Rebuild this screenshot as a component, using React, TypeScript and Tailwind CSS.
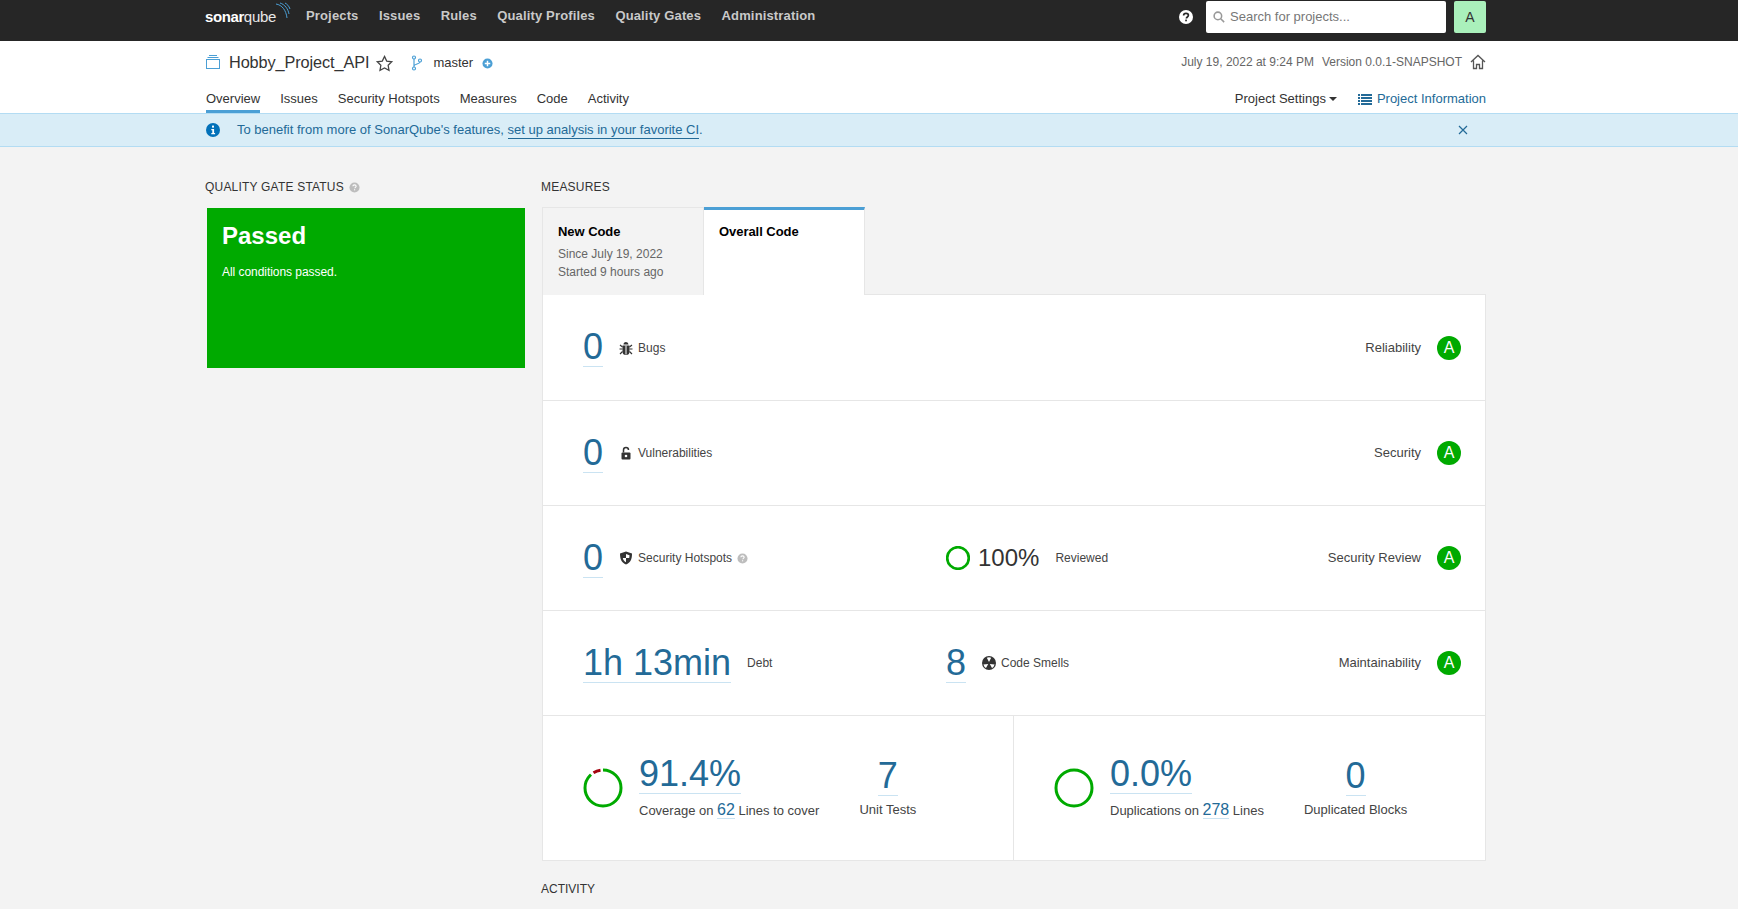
import React from "react";

const font = { fontFamily: '"Liberation Sans", Arial, sans-serif' };

const HelpDot = () => (
  <svg viewBox="0 0 12 12" className="w-[11px] h-[11px] inline-block">
    <circle cx="6" cy="6" r="5.5" fill="#bdbdbd" />
    <path d="M4.2 4.7c0-1 .8-1.6 1.8-1.6s1.8.6 1.8 1.5c0 1.3-1.5 1.2-1.5 2.3" fill="none" stroke="#fff" strokeWidth="1.2" />
    <rect x="5.5" y="7.9" width="1.2" height="1.2" fill="#fff" />
  </svg>
);

const Rating = () => (
  <div className="w-6 h-6 rounded-full bg-[#00aa00] text-white flex items-center justify-center text-[16px] leading-none">
    A
  </div>
);

const BigLink = ({ children }: { children: React.ReactNode }) => (
  <span className="inline-block text-[36px] leading-[36px] pt-[1px] pb-[1px] text-[#236a97] border-b border-[#cae3f2]">
    {children}
  </span>
);

const Circle = ({ size, red, stroke = 3 }: { size: number; red?: boolean; stroke?: number }) => (
  <svg width={size} height={size} viewBox="0 0 40 40" className="shrink-0">
    <circle cx="20" cy="20" r="18" fill="none" stroke="#00aa00" strokeWidth={stroke} />
    {red && (
      <>
        <path d="M20 2 A18 18 0 0 0 8 6.6" fill="none" stroke="#fff" strokeWidth="5" />
        <path d="M17.5 2.2 A18 18 0 0 0 10.5 4.8" fill="none" stroke="#a4030f" strokeWidth="3" />
      </>
    )}
  </svg>
);

const Row = ({ children, label }: { children: React.ReactNode; label: string }) => (
  <div className="h-[105px] first:h-[106px] border-b border-[#e6e6e6] flex items-center pl-[40px] pr-[24px]">
    <div className="flex-1 flex items-center">{children}</div>
    <span className="text-[13px] text-[#444] mr-4">{label}</span>
    <Rating />
  </div>
);

const Sub = ({ children }: { children: React.ReactNode }) => (
  <span className="text-[12px] text-[#444] flex items-center gap-[5px]">{children}</span>
);

export default function App() {
  return (
    <div style={font} className="min-h-[909px] h-[909px] overflow-hidden bg-[#f3f3f3] text-[#333]">
      <div className="h-[41px] bg-[#262626]">
        <div className="w-[1281px] ml-[205px] flex items-center h-full">
          <div className="relative w-[84px] text-[15px] text-white mt-[-6px] flex items-baseline">
            <span className="font-bold tracking-[-0.4px]">sonar</span>
            <span className="font-light tracking-[-0.3px] text-[#e8e8e8]">qube</span>
            <svg viewBox="0 0 16 18" className="absolute right-[-2px] top-[-4px] w-4 h-[18px]" fill="none" stroke="#4b9fd5" strokeWidth="1">
              <path d="M1 2c6 1 10 6 11 14" />
              <path d="M5 1c5 1.500 8 6 9 11" />
              <path d="M10 1c2 1 4 3 5 6" />
            </svg>
          </div>
          <nav className="flex gap-[20.4px] ml-[17px] text-[13px] font-bold text-[#c9c9c9] mt-[-9px] tracking-[0.15px]">
            <span>Projects</span>
            <span>Issues</span>
            <span>Rules</span>
            <span>Quality Profiles</span>
            <span>Quality Gates</span>
            <span>Administration</span>
          </nav>
          <div className="ml-auto flex items-center self-start mt-px">
            <svg viewBox="0 0 14 14" className="w-[14px] h-[14px] mr-[13px]">
              <circle cx="7" cy="7" r="7" fill="#fff" />
              <path d="M4.600 5.400c0-1.300 1-2.100 2.400-2.100s2.400.8 2.400 2c0 1.700-2 1.600-2 3.100" fill="none" stroke="#262626" strokeWidth="1.700" />
              <rect x="6.200" y="9.600" width="1.700" height="1.700" fill="#262626" />
            </svg>
            <div className="w-[240px] h-8 bg-white rounded-[2px] flex items-center pl-[7px] text-[13px] text-[#777]">
              <svg viewBox="0 0 14 14" className="w-3 h-3 mr-[5px]" fill="none" stroke="#999" strokeWidth="1.800">
                <circle cx="5.700" cy="5.700" r="4.400" />
                <path d="M9 9l4 4" />
              </svg>
              Search for projects...
            </div>
            <div className="w-8 h-8 ml-[8px] bg-[#aaf0bb] rounded-[2px] flex items-center justify-center text-[14px] text-[#333]">
              A
            </div>
          </div>
        </div>
      </div>

      <div className="bg-white h-[72px]">
        <div className="w-[1280px] ml-[206px] relative">
          <div className="flex items-center h-[40px] pt-[4px]">
            <svg viewBox="0 0 14 14" className="w-[14px] h-[14px] mr-[9px] mt-[-2px]" fill="none" stroke="#4b9fd5" strokeWidth="1">
              <rect x="0.500" y="4.500" width="13" height="9" />
              <path d="M1.500 2.500h11M3 .500h8" />
            </svg>
            <span className="text-[16.300px] tracking-[-0.1px] text-[#333] mt-[-1px]">Hobby_Project_API</span>
            <svg viewBox="0 0 24 24" className="w-[19px] h-[19px] ml-[6px]" fill="none" stroke="#444" strokeWidth="1.600">
              <path d="M12 3l2.800 5.900 6.400.9-4.600 4.500 1.100 6.400-5.700-3-5.700 3 1.100-6.400L2.800 9.800l6.400-.9z" />
            </svg>
            <svg viewBox="0 0 12 16" className="w-3 h-4 ml-[17px]" fill="none" stroke="#4b9fd5" strokeWidth="1.200">
              <circle cx="3" cy="2.500" r="1.500" />
              <circle cx="3" cy="13.500" r="1.500" />
              <circle cx="9" cy="5.500" r="1.500" />
              <path d="M3 4v8M9 7c0 2-6 2-6 4" />
            </svg>
            <span className="text-[13px] ml-[10px] text-[#333]">master</span>
            <svg viewBox="0 0 12 12" className="w-[11px] h-[11px] ml-[9px]">
              <circle cx="6" cy="6" r="5.500" fill="#4b9fd5" />
              <path d="M3 6h6M6 3v6" stroke="#fff" strokeWidth="1.600" />
            </svg>
            <div className="ml-auto flex items-center text-[12px] text-[#666] mt-[-2px]">
              <span>July 19, 2022 at 9:24 PM</span>
              <span className="ml-[8px]">Version 0.0.1-SNAPSHOT</span>
              <svg viewBox="0 0 16 16" className="w-4 h-4 ml-[8px]" fill="none" stroke="#555" strokeWidth="1.300">
                <path d="M1 8l7-6.500L15 8M3.500 6.500v8h3v-4h3v4h3v-8" />
              </svg>
            </div>
          </div>
          <div className="flex items-start h-[32px] text-[13px] text-[#333]">
            <div className="flex gap-[20px]">
              <span className="h-[32px] pt-[8px] border-b-[3px] border-[#4b9fd5]">Overview</span>
              <span className="pt-[8px]">Issues</span>
              <span className="pt-[8px]">Security Hotspots</span>
              <span className="pt-[8px]">Measures</span>
              <span className="pt-[8px]">Code</span>
              <span className="pt-[8px]">Activity</span>
            </div>
            <div className="ml-auto flex items-center pt-[8px]">
              <span>Project Settings</span>
              <span className="ml-[3px] w-0 h-0 border-x-[4px] border-x-transparent border-t-[4px] border-t-[#333]" />
              <svg viewBox="0 0 14 12" className="w-[14px] h-3 ml-[21px] mr-[5px]" fill="#236a97">
                <path d="M0 1h2v2H0zM3 1h11v2H3zM0 4h2v2H0zM3 4h11v2H3zM0 7h2v2H0zM3 7h11v2H3zM0 10h2v2H0zM3 10h11v2H3z" />
              </svg>
              <span className="text-[#236a97]">Project Information</span>
            </div>
          </div>
        </div>
      </div>

      <div className="h-[34px] bg-[#d9edf7] border-y border-[#b3dcf3]">
        <div className="w-[1280px] ml-[206px] h-full flex items-center text-[13px] text-[#236a97]">
          <svg viewBox="0 0 14 14" className="w-[14px] h-[14px] mr-[17px]">
            <circle cx="7" cy="7" r="7" fill="#0271b9" />
            <rect x="6" y="2.600" width="2" height="2" fill="#fff" />
            <path d="M5.300 6h2.800v4h1v1.300H5.300V10h1V7.300h-1z" fill="#fff" />
          </svg>
          <span>
            To benefit from more of SonarQube&apos;s features,{" "}
            <span className="border-b border-[#236a97] pb-[1px]">set up analysis in your favorite CI</span>.
          </span>
          <svg viewBox="0 0 10 10" className="w-[10px] h-[10px] ml-auto mr-[18px]" stroke="#236a97" strokeWidth="1.200">
            <path d="M1 1l8 8M9 1l-8 8" />
          </svg>
        </div>
      </div>

      <div className="w-[1281px] ml-[205px] flex">
        <div className="w-[336px] shrink-0">
          <h3 className="mt-[33px] h-[14px] text-[12px] leading-[14px] font-normal text-[#333] tracking-[0.2px] flex items-center gap-[5px]">
            QUALITY GATE STATUS <HelpDot />
          </h3>
          <div className="ml-[2px] mt-[14px] w-[318px] h-[160px] bg-[#00aa00] text-white pl-[15px] pt-[13px]">
            <div className="text-[24px] leading-[30px] font-bold">Passed</div>
            <div className="text-[12px] mt-[12px] tracking-[-0.05px]">All conditions passed.</div>
          </div>
        </div>

        <div className="flex-1">
          <h3 className="mt-[33px] h-[14px] text-[12px] leading-[14px] font-normal text-[#333] tracking-[0.2px]">MEASURES</h3>
          <div className="ml-[1px] mt-[13px] flex h-[88px]">
            <div className="w-[162px] border border-b-0 border-[#e6e6e6] pl-[15px] pt-[16px]">
              <div className="text-[13px] font-bold text-black leading-[16px] tracking-[-0.05px]">New Code</div>
              <div className="text-[12px] text-[#666] mt-[5px] leading-[18px]">
                Since July 19, 2022
                <br />
                Started 9 hours ago
              </div>
            </div>
            <div className="w-[161px] bg-white border-t-[3px] border-[#4b9fd5] border-r border-r-[#e6e6e6] pl-[15px] pt-[14px] text-[13px] font-bold text-black leading-[16px] tracking-[-0.05px]">
              Overall Code
            </div>
            <div className="flex-1 border-b border-[#e6e6e6]" />
          </div>

          <div className="ml-[1px] bg-white border border-t-0 border-[#e6e6e6]">
            <Row label="Reliability">
              <BigLink>0</BigLink>
              <span className="ml-[16px]"><Sub>
                <svg viewBox="0 0 14 14" className="w-[14px] h-[14px]" fill="#333">
                  <path d="M4.500 3.500a2.500 2.500 0 0 1 5 0zM3.500 4.500h7v6a3.500 3.500 0 0 1-7 0z" />
                  <path d="M1 4l2.500 2M13 4l-2.500 2M.5 8h3M13.500 8h-3M1 13l2.500-2.500M13 13l-2.500-2.500" stroke="#333" strokeWidth="1.200" />
                  <path d="M7 4.500v9" stroke="#fff" strokeWidth="1" />
                </svg>
                Bugs
              </Sub></span>
            </Row>
            <Row label="Security">
              <BigLink>0</BigLink>
              <span className="ml-[16px]"><Sub>
                <svg viewBox="0 0 14 14" className="w-[14px] h-[14px]">
                  <path d="M4.500 6.500V4a2.500 2.500 0 0 1 5 0" fill="none" stroke="#333" strokeWidth="1.500" />
                  <rect x="2.500" y="6.500" width="9" height="7" rx="1" fill="#333" />
                  <circle cx="7" cy="10" r="1.300" fill="#fff" />
                </svg>
                Vulnerabilities
              </Sub></span>
            </Row>
            <Row label="Security Review">
              <div className="w-[363px] flex items-center">
                <BigLink>0</BigLink>
                <span className="ml-[16px]"><Sub>
                  <svg viewBox="0 0 14 14" className="w-[14px] h-[14px]">
                    <path d="M7 .5l6 2c0 6-1.500 9-6 11-4.500-2-6-5-6-11z" fill="#333" />
                    <path d="M7 3l3.500 1.200c0 1.200-.1 2-.3 2.800H7zM7 7v4.300c-1.700-.9-2.800-2.200-3.200-4.300z" fill="#fff" />
                  </svg>
                  Security Hotspots <HelpDot />
                </Sub></span>
              </div>
              <Circle size={24} stroke={4.500} />
              <span className="text-[24px] text-[#333] ml-[8px]">100%</span>
              <span className="text-[12px] text-[#444] ml-[16px]">Reviewed</span>
            </Row>
            <Row label="Maintainability">
              <div className="w-[363px] flex items-center">
                <BigLink>1h 13min</BigLink>
                <span className="ml-[16px]"><Sub>Debt</Sub></span>
              </div>
              <BigLink>8</BigLink>
              <span className="ml-[16px]"><Sub>
                <svg viewBox="0 0 14 14" className="w-[14px] h-[14px]">
                  <circle cx="7" cy="7" r="7" fill="#333" />
                  <path d="M4.800 1.800A5.800 5.800 0 0 1 9.200 1.800L7 6zM1.400 8.500A5.800 5.800 0 0 0 4 12L6.200 8zM12.600 8.500A5.800 5.800 0 0 1 10 12L7.800 8z" fill="#fff" />
                </svg>
                Code Smells
              </Sub></span>
            </Row>

            <div className="h-[144px] flex">
              <div className="w-[471px] border-r border-[#e6e6e6] pl-[40px] flex items-center">
                <Circle size={40} red />
                <div className="ml-[16px] mt-[1px]">
                  <BigLink>91.4%</BigLink>
                  <div className="text-[13px] text-[#444] mt-[4px] leading-[24px]">
                    Coverage on <span className="text-[16px] text-[#236a97] border-b border-[#cae3f2]">62</span> Lines to cover
                  </div>
                </div>
                <div className="ml-[40px] flex flex-col items-center">
                  <BigLink>7</BigLink>
                  <div className="text-[13px] text-[#444] mt-[4px] leading-[20px]">Unit Tests</div>
                </div>
              </div>
              <div className="flex-1 pl-[40px] flex items-center">
                <Circle size={40} />
                <div className="ml-[16px] mt-[1px]">
                  <BigLink>0.0%</BigLink>
                  <div className="text-[13px] text-[#444] mt-[4px] leading-[24px]">
                    Duplications on <span className="text-[16px] text-[#236a97] border-b border-[#cae3f2]">278</span> Lines
                  </div>
                </div>
                <div className="ml-[40px] flex flex-col items-center">
                  <BigLink>0</BigLink>
                  <div className="text-[13px] text-[#444] mt-[4px] leading-[20px]">Duplicated Blocks</div>
                </div>
              </div>
            </div>
          </div>
          <h3 className="mt-[21px] text-[12px] leading-[14px] font-normal text-[#333]">ACTIVITY</h3>
        </div>
      </div>
    </div>
  );
}
